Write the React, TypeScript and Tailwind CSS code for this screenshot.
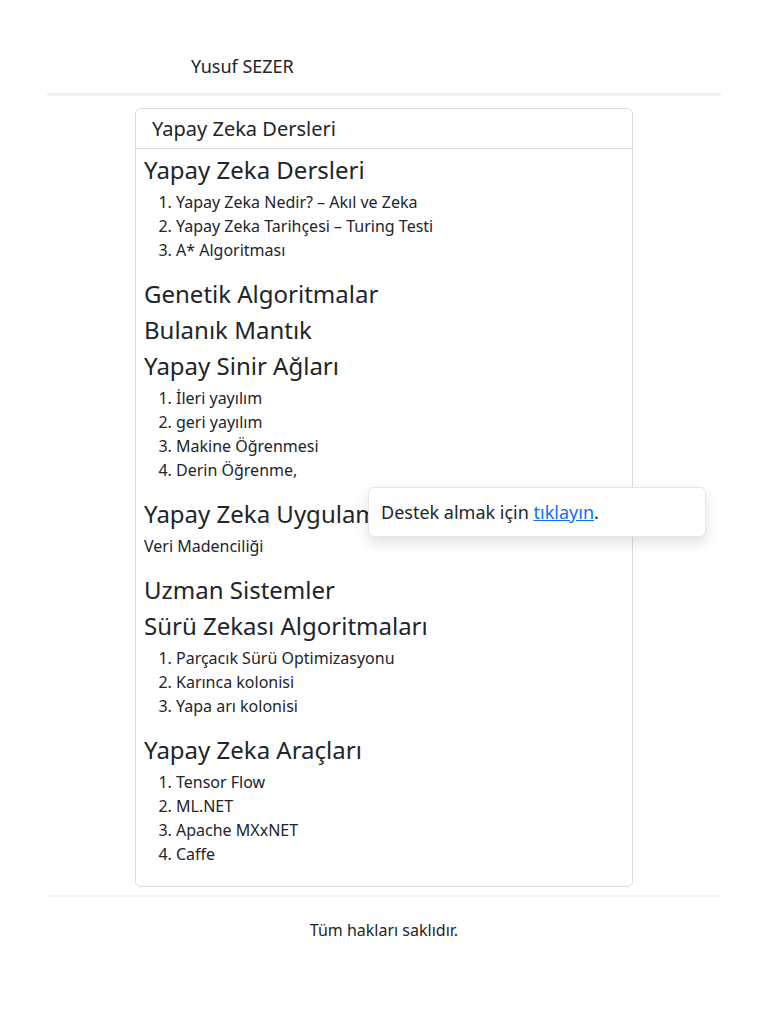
import React from 'react'

type Section = {
  title: string
  items?: string[]
  text?: string
}

const sections: Section[] = [
  {
    title: 'Yapay Zeka Dersleri',
    items: ['Yapay Zeka Nedir? – Akıl ve Zeka', 'Yapay Zeka Tarihçesi – Turing Testi', 'A* Algoritması'],
  },
  { title: 'Genetik Algoritmalar' },
  { title: 'Bulanık Mantık' },
  {
    title: 'Yapay Sinir Ağları',
    items: ['İleri yayılım', 'geri yayılım', 'Makine Öğrenmesi', 'Derin Öğrenme,'],
  },
  { title: 'Yapay Zeka Uygulamaları', text: 'Veri Madenciliği' },
  { title: 'Uzman Sistemler' },
  {
    title: 'Sürü Zekası Algoritmaları',
    items: ['Parçacık Sürü Optimizasyonu', 'Karınca kolonisi', 'Yapa arı kolonisi'],
  },
  {
    title: 'Yapay Zeka Araçları',
    items: ['Tensor Flow', 'ML.NET', 'Apache MXxNET', 'Caffe'],
  },
]

export default function App() {
  return (
    <div className="relative min-h-[1024px] bg-white text-[#212529] font-['Noto_Sans',sans-serif] text-[16px] leading-6">
      <div className="mx-[47px]">
        <header className="h-[95px] pt-[54px] pl-[144px] border-b-[2px] border-[#f1f1f1] shadow-[0_1px_1px_rgba(0,0,0,0.03)]">
          <span className="text-[18px] leading-6">Yusuf SEZER</span>
        </header>

        <main className="pt-[13px] pb-[8px] flex justify-center">
          <div className="w-[498px] border border-[#dcdcdc] rounded-[6px]">
            <div className="h-[40px] px-4 flex items-center text-[20px] border-b border-[#dcdcdc]">
              Yapay Zeka Dersleri
            </div>
            <div className="px-2 pt-[5px] pb-[4px]">
              {sections.map((s) => (
                <div key={s.title}>
                  <h4 className="text-[24px] leading-[28px] pt-[2px] mb-[6px]">{s.title}</h4>
                  {s.items && (
                    <ol className="list-decimal pl-8 mb-4">
                      {s.items.map((it) => (
                        <li key={it}>{it}</li>
                      ))}
                    </ol>
                  )}
                  {s.text && <p className="mb-4">{s.text}</p>}
                </div>
              ))}
            </div>
          </div>
        </main>

        <footer className="border-t-[2px] border-[#f1f1f1] pt-[21px] text-center">
          Tüm hakları saklıdır.
        </footer>
      </div>

      <div className="absolute left-[368px] top-[487px] w-[338px] h-[50px] px-3 flex items-center bg-white border border-[#e6e6e6] rounded-[6px] shadow-[0_6px_14px_rgba(0,0,0,0.12)] text-[18px]">
        Destek almak için&nbsp;
        <a href="#" className="text-[#0d6efd] underline">
          tıklayın
        </a>
        .
      </div>
    </div>
  )
}
